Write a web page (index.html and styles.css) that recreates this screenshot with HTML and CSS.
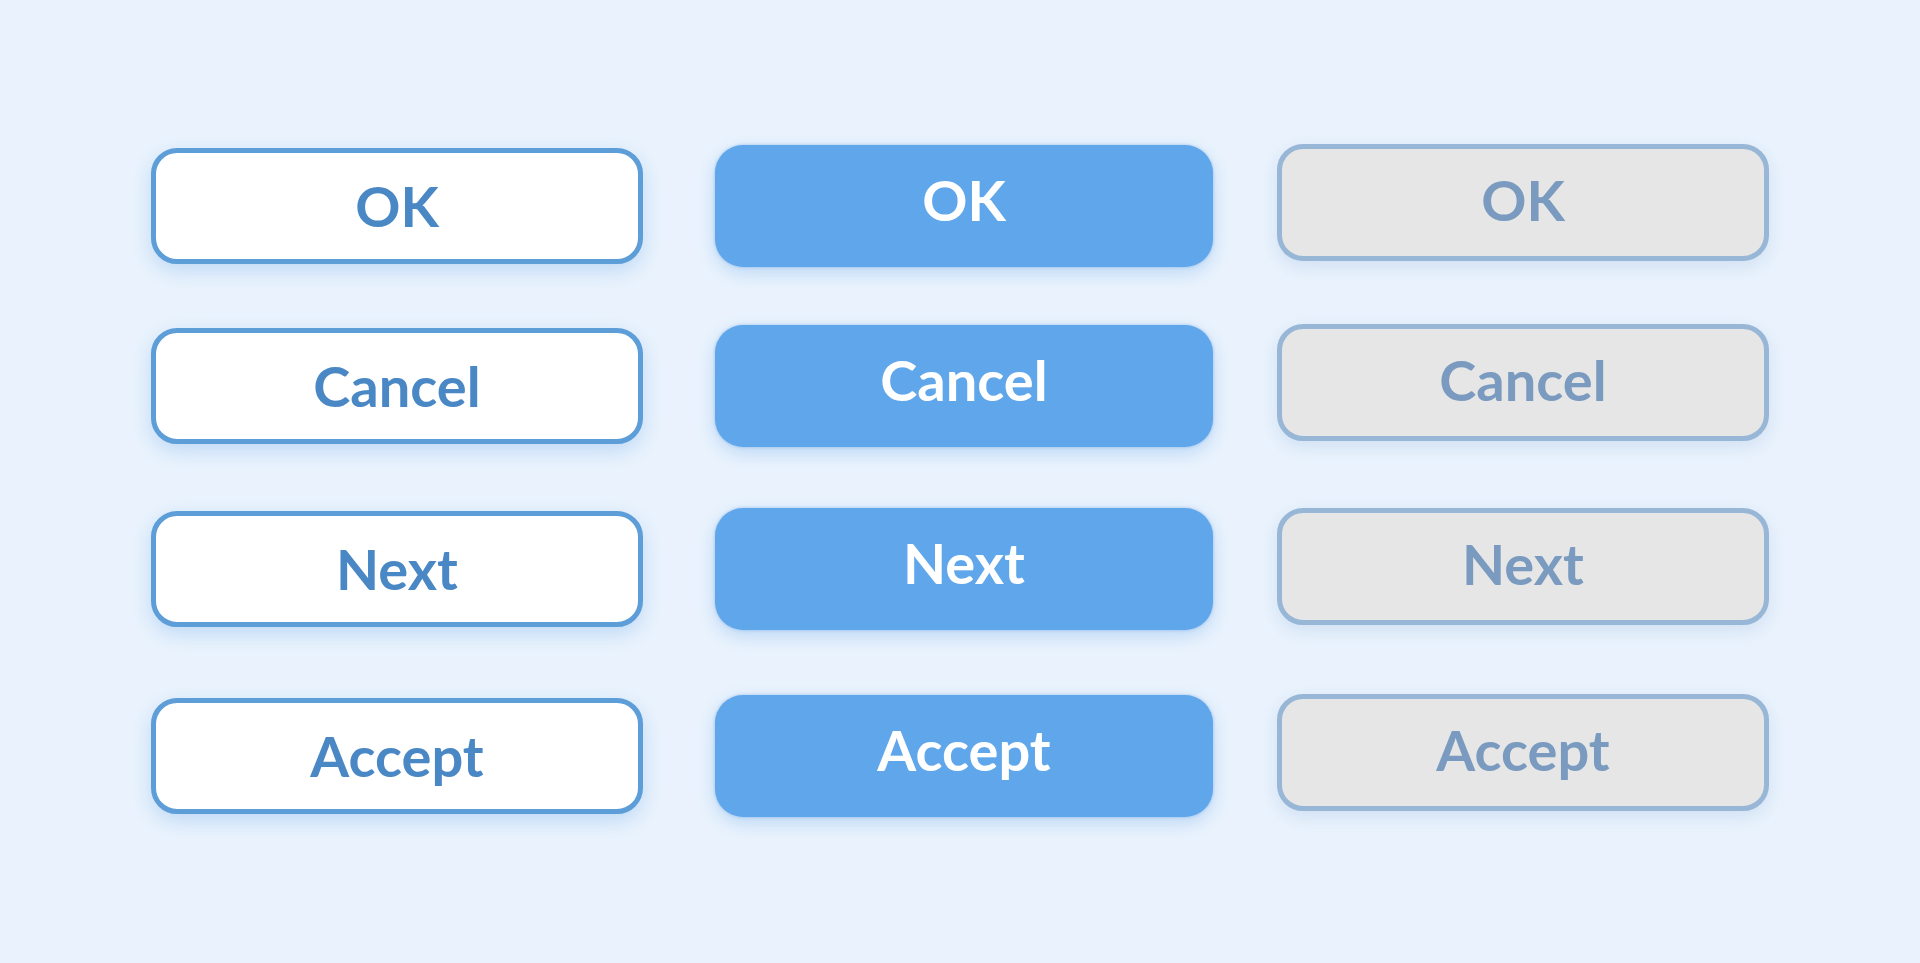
FILE: index.html
```html
<!DOCTYPE html>
<html lang="en">
<head>
<meta charset="utf-8">
<title>Buttons</title>
<link rel="stylesheet" href="styles.css">
</head>
<body>
<main class="board">
  <div class="col col-outline">
    <button class="btn btn-outline">OK</button>
    <button class="btn btn-outline">Cancel</button>
    <button class="btn btn-outline">Next</button>
    <button class="btn btn-outline">Accept</button>
  </div>
  <div class="col col-filled">
    <button class="btn btn-filled">OK</button>
    <button class="btn btn-filled">Cancel</button>
    <button class="btn btn-filled">Next</button>
    <button class="btn btn-filled">Accept</button>
  </div>
  <div class="col col-disabled">
    <button class="btn btn-disabled">OK</button>
    <button class="btn btn-disabled">Cancel</button>
    <button class="btn btn-disabled">Next</button>
    <button class="btn btn-disabled">Accept</button>
  </div>
</main>
</body>
</html>
```

FILE: styles.css
```css
html, body {
  margin: 0;
  padding: 0;
  height: 100%;
}

body {
  background: #eaf3fd;
  font-family: Lato, "Open Sans", "Liberation Sans", sans-serif;
  overflow: hidden;
}

.board {
  display: flex;
  align-items: flex-start;
  padding-top: 144px;
  padding-left: 151px;
}

.col {
  display: flex;
  flex-direction: column;
}

.col-outline {
  width: 492px;
  padding-top: 4px;
  gap: 64px;
}
.col-outline .btn:nth-child(3) { margin-top: 3px; }
.col-outline .btn:nth-child(4) { margin-top: 7px; }

.col-filled {
  width: 498px;
  margin-left: 72px;
  padding-top: 1px;
  gap: 58px;
}
.col-filled .btn:nth-child(3) { margin-top: 3px; }
.col-filled .btn:nth-child(4) { margin-top: 7px; }

.col-disabled {
  width: 492px;
  margin-left: 64px;
  gap: 63px;
}
.col-disabled .btn:nth-child(3) { margin-top: 4px; }
.col-disabled .btn:nth-child(4) { margin-top: 6px; }

.btn {
  display: flex;
  align-items: center;
  justify-content: center;
  box-sizing: border-box;
  width: 100%;
  margin: 0;
  padding: 0;
  font-family: Lato, "Open Sans", "Liberation Sans", sans-serif;
  font-weight: 700;
  font-size: 56px;
  line-height: 1;
  cursor: pointer;
}

.btn-outline {
  height: 116px;
  background: #ffffff;
  border: 5px solid #5d9dd8;
  border-radius: 26px;
  color: #4a88c5;
  box-shadow: 0 7px 20px rgba(120, 175, 235, 0.38);
}

.btn-filled {
  height: 122px;
  background: #5fa6ea;
  border: none;
  border-radius: 28px;
  color: #ffffff;
  padding-bottom: 12px;
  box-shadow: 0 0 3px rgba(70, 140, 220, 0.45), 0 6px 18px rgba(110, 170, 235, 0.38);
}

.btn-disabled {
  height: 117px;
  background: #e6e6e6;
  border: 5px solid #98b6d6;
  border-radius: 26px;
  color: #7a9bbf;
  padding-bottom: 6px;
  box-shadow: 0 6px 18px rgba(140, 175, 215, 0.28);
}
```
